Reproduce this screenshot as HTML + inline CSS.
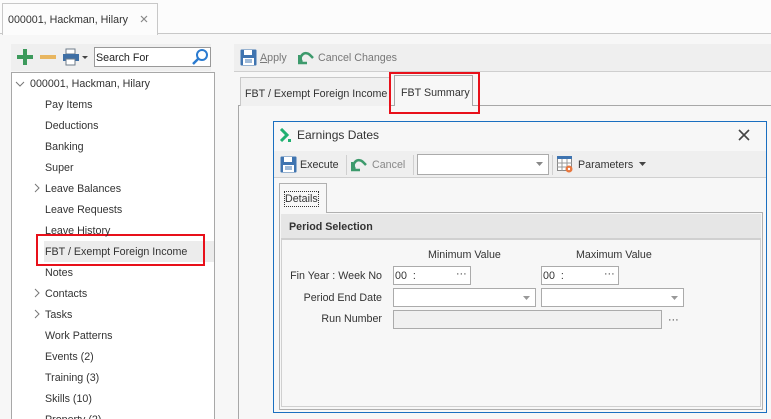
<!DOCTYPE html>
<html><head><style>
*{box-sizing:border-box;margin:0;padding:0}
html,body{width:771px;height:419px;overflow:hidden}
body{background:#f7f7f7;font-family:"Liberation Sans",sans-serif;font-size:10.7px;color:#333;position:relative}
.a{position:absolute}
.t{position:absolute;white-space:nowrap;line-height:14px}
.r{position:absolute;white-space:nowrap;line-height:14px;right:389px}
.box{position:absolute;background:#fff;border:1px solid #ababab}
</style></head><body>
<div class="a" style="left:0;top:0;width:771px;height:34px;background:#fcfcfc;border-bottom:1px solid #c8c8c8"></div>
<div class="a" style="left:2px;top:3px;width:156px;height:32px;background:#fcfcfc;border:1px solid #c8c8c8;border-bottom:none"></div>
<div class="t" style="left:8px;top:13px">000001, Hackman, Hilary</div>
<svg class="a" style="left:140px;top:15px" width="8" height="8"><path d="M1 1l6 6M7 1L1 7" stroke="#888" stroke-width="1.2"/></svg>

<div class="a" style="left:11px;top:44px;width:200px;height:27px;background:#efefef"></div>
<div class="a" style="left:17px;top:55px;width:16px;height:4px;background:#3d9a5c"></div>
<div class="a" style="left:23px;top:49px;width:4px;height:16px;background:#3d9a5c"></div>
<div class="a" style="left:40px;top:55px;width:16px;height:4px;background:#e8b660"></div>
<svg class="a" style="left:62px;top:48px" width="28" height="18"><rect x="4" y="1" width="9" height="5" fill="#fff" stroke="#6d7b8a"/><rect x="1" y="6" width="16" height="7" fill="#3f6fa5"/><rect x="4" y="11" width="9" height="6" fill="#fff" stroke="#6d7b8a"/><path d="M20 8h6l-3 3z" fill="#444"/></svg>
<div class="box" style="left:94px;top:47px;width:117px;height:20px;border-color:#999"></div>
<div class="t" style="left:96px;top:51px;color:#222">Search For</div>
<svg class="a" style="left:191px;top:48px" width="18" height="18"><circle cx="11" cy="7" r="5" fill="none" stroke="#2b7bd0" stroke-width="2"/><path d="M7 11l-5 5" stroke="#2b7bd0" stroke-width="2.5"/></svg>

<div class="box" style="left:11px;top:72px;width:204px;height:350px;border-color:#a8a8a8"></div>
<svg class="a" style="left:15px;top:80px" width="10" height="8"><path d="M1 2l4 4 4-4" fill="none" stroke="#777"/></svg>
<div class="t" style="left:30px;top:77px">000001, Hackman, Hilary</div>
<div class="a" style="left:44px;top:241px;width:170px;height:21px;background:#ececec"></div>
<div class="a" style="left:36px;top:234px;width:169px;height:32px;border:2px solid #e8101a"></div>
<div class="t" style="left:45px;top:98px">Pay Items</div>
<div class="t" style="left:45px;top:119px">Deductions</div>
<div class="t" style="left:45px;top:140px">Banking</div>
<div class="t" style="left:45px;top:161px">Super</div>
<div class="t" style="left:45px;top:182px">Leave Balances</div>
<div class="t" style="left:45px;top:203px">Leave Requests</div>
<div class="t" style="left:45px;top:224px">Leave History</div>
<div class="t" style="left:45px;top:245px">FBT / Exempt Foreign Income</div>
<div class="t" style="left:45px;top:266px">Notes</div>
<div class="t" style="left:45px;top:287px">Contacts</div>
<div class="t" style="left:45px;top:308px">Tasks</div>
<div class="t" style="left:45px;top:329px">Work Patterns</div>
<div class="t" style="left:45px;top:350px">Events (2)</div>
<div class="t" style="left:45px;top:371px">Training (3)</div>
<div class="t" style="left:45px;top:392px">Skills (10)</div>
<div class="t" style="left:45px;top:413px">Property (2)</div>
<svg class="a" style="left:33px;top:183px" width="8" height="10"><path d="M2 1l4 4-4 4" fill="none" stroke="#777"/></svg>
<svg class="a" style="left:33px;top:288px" width="8" height="10"><path d="M2 1l4 4-4 4" fill="none" stroke="#777"/></svg>
<svg class="a" style="left:33px;top:309px" width="8" height="10"><path d="M2 1l4 4-4 4" fill="none" stroke="#777"/></svg>

<div class="a" style="left:234px;top:44px;width:537px;height:28px;background:#efefef;border-bottom:1px solid #cfcfcf"></div>
<svg class="a" style="left:240px;top:49px" width="17" height="17"><rect x="0.5" y="0.5" width="16" height="16" rx="1" fill="#3f74b0"/><rect x="4" y="1" width="8" height="5" fill="#fff"/><rect x="3" y="9" width="11" height="7" fill="#fff"/><path d="M5 11h7M5 13h7" stroke="#3f74b0"/></svg>
<div class="t" style="left:260px;top:51px;color:#777"><u>A</u>pply</div>
<svg class="a" style="left:298px;top:51px" width="18" height="14"><path d="M4 11a5 5 0 0 1 8-7l3 3" fill="none" stroke="#3d9a6c" stroke-width="2.5"/><path d="M1 4v8h8" fill="none" stroke="#3d9a6c" stroke-width="2.5"/></svg>
<div class="t" style="left:318px;top:51px;color:#777">Cancel Changes</div>

<div class="a" style="left:238px;top:105px;width:540px;height:320px;border:1px solid #a8a8a8;background:#f7f7f7"></div>
<div class="a" style="left:240px;top:77px;width:151px;height:29px;background:#f0f0f0;border:1px solid #c8c8c8;border-bottom:none"></div>
<div class="t" style="left:245px;top:87px">FBT / Exempt Foreign Income</div>
<div class="a" style="left:394px;top:75px;width:79px;height:31px;background:#f7f7f7;border:1px solid #a8a8a8;border-bottom:none"></div>
<div class="t" style="left:401px;top:86px">FBT Summary</div>
<div class="a" style="left:389px;top:72px;width:91px;height:42px;border:2px solid #e8101a"></div>

<div class="a" style="left:273px;top:121px;width:494px;height:292px;border:1px solid #1a6fc0;background:#f7f7f7"></div>
<svg class="a" style="left:279px;top:128px" width="14" height="15"><path d="M2 1l6 6-6 6" fill="none" stroke="#20b070" stroke-width="3"/><rect x="9" y="11" width="3" height="3" fill="#20b070"/></svg>
<div class="t" style="left:297px;top:128px;font-size:12px;color:#333">Earnings Dates</div>
<svg class="a" style="left:738px;top:129px" width="12" height="12"><path d="M1 1l10 10M11 1L1 11" stroke="#444" stroke-width="1.6"/></svg>
<div class="a" style="left:274px;top:151px;width:492px;height:27px;background:#efefef;border-bottom:1px solid #d0d0d0"></div>
<svg class="a" style="left:280px;top:156px" width="17" height="17"><rect x="0.5" y="0.5" width="16" height="16" rx="1" fill="#3f74b0"/><rect x="4" y="1" width="8" height="5" fill="#fff"/><rect x="3" y="9" width="11" height="7" fill="#fff"/><path d="M5 11h7M5 13h7" stroke="#3f74b0"/></svg>
<div class="t" style="left:300px;top:158px">Execute</div>
<div class="a" style="left:346px;top:155px;width:1px;height:20px;background:#d0d0d0"></div>
<svg class="a" style="left:351px;top:158px" width="18" height="14"><path d="M4 11a5 5 0 0 1 8-7l3 3" fill="none" stroke="#3d9a6c" stroke-width="2.5"/><path d="M1 4v8h8" fill="none" stroke="#3d9a6c" stroke-width="2.5"/></svg>
<div class="t" style="left:372px;top:158px;color:#888">Cancel</div>
<div class="a" style="left:413px;top:155px;width:1px;height:20px;background:#d0d0d0"></div>
<div class="box" style="left:417px;top:154px;width:132px;height:21px"></div>
<svg class="a" style="left:536px;top:162px" width="7" height="4"><path d="M0 0h7l-3.5 4z" fill="#888"/></svg>
<div class="a" style="left:552px;top:155px;width:1px;height:20px;background:#d0d0d0"></div>
<svg class="a" style="left:557px;top:156px" width="18" height="18"><rect x="0.5" y="0.5" width="14" height="14" fill="#fff" stroke="#888"/><rect x="0" y="0" width="15" height="3" fill="#3f74b0"/><path d="M5 3v12M10 3v12M0 7h15M0 11h15" stroke="#999"/><circle cx="12" cy="13" r="3.5" fill="#e8773e"/><circle cx="12" cy="13" r="1.2" fill="#fff"/></svg>
<div class="t" style="left:578px;top:158px">Parameters</div>
<svg class="a" style="left:639px;top:162px" width="7" height="4"><path d="M0 0h7l-3.5 4z" fill="#444"/></svg>

<div class="a" style="left:279px;top:212px;width:484px;height:198px;border:1px solid #b0b0b0;background:#f7f7f7"></div>
<div class="a" style="left:279px;top:183px;width:48px;height:30px;background:#f7f7f7;border:1px solid #b0b0b0;border-bottom:none"></div>
<div class="t" style="left:285px;top:192px;outline:1px dotted #333">Details</div>
<div class="a" style="left:281px;top:214px;width:480px;height:25px;background:#e6e6e6;border-bottom:1px solid #d0d0d0"></div>
<div class="t" style="left:289px;top:220px;font-weight:bold">Period Selection</div>
<div class="a" style="left:281px;top:239px;width:480px;height:168px;border:1px solid #d0d0d0"></div>

<div class="t" style="left:428px;top:248px">Minimum Value</div>
<div class="t" style="left:576px;top:248px">Maximum Value</div>
<div class="r" style="top:269px">Fin Year : Week No</div>
<div class="box" style="left:393px;top:266px;width:78px;height:19px"></div>
<div class="t" style="left:395px;top:269px">00 &nbsp;:</div><div class="t" style="left:456px;top:267px">···</div>
<div class="box" style="left:541px;top:266px;width:78px;height:19px"></div>
<div class="t" style="left:543px;top:269px">00 &nbsp;:</div><div class="t" style="left:604px;top:267px">···</div>
<div class="r" style="top:291px">Period End Date</div>
<div class="box" style="left:393px;top:288px;width:143px;height:19px"></div>
<svg class="a" style="left:523px;top:296px" width="7" height="4"><path d="M0 0h7l-3.5 4z" fill="#999"/></svg>
<div class="box" style="left:541px;top:288px;width:143px;height:19px"></div>
<svg class="a" style="left:671px;top:296px" width="7" height="4"><path d="M0 0h7l-3.5 4z" fill="#999"/></svg>
<div class="r" style="top:312px">Run Number</div>
<div class="box" style="left:393px;top:310px;width:269px;height:19px;background:#f0f0f0"></div>
<div class="t" style="left:668px;top:313px">···</div>
</body></html>
